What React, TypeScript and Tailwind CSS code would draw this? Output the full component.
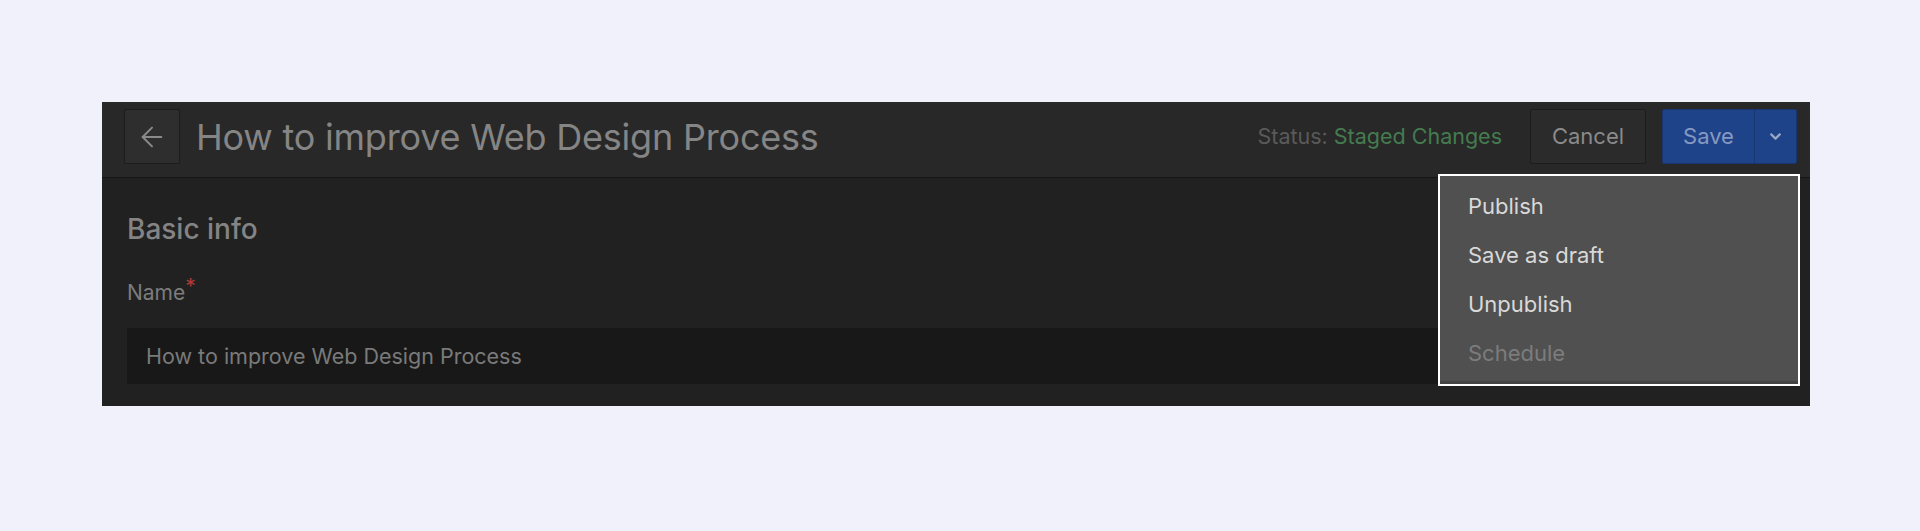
import { ArrowLeft, ChevronDown } from 'lucide-react';

const menuItems = [
  { label: 'Publish', disabled: false },
  { label: 'Save as draft', disabled: false },
  { label: 'Unpublish', disabled: false },
  { label: 'Schedule', disabled: true },
];

export default function App() {
  return (
    <div
      className="h-[531px] w-[1920px] bg-[#f0f1fa] pt-[102px] pl-[102px]"
      style={{ fontFamily: 'Inter, "Noto Sans", sans-serif' }}
    >
      <div className="relative w-[1708px] h-[304px] bg-[#212121]">
        {/* header */}
        <div className="flex items-start h-[76px] bg-[#282828] border-b border-[#151515] pl-[22px] pr-[13px] pt-[7px]">
          <button className="flex items-center justify-center w-[56px] h-[55px] bg-[#2e2e2e] border border-[#1c1c1c] rounded-[2px] text-[#8a8a8a]">
            <ArrowLeft size={32} strokeWidth={1.5} />
          </button>
          <h1 className="ml-[16px] h-[55px] flex items-center text-[36px] leading-none text-[#858585] tracking-[-0.2px]">
            How to improve Web Design Process
          </h1>
          <div className="ml-auto flex items-center h-[55px]">
            <span className="text-[21.5px] text-[#5a5a5a]">
              Status: <span className="text-[#447c50]">Staged Changes</span>
            </span>
            <button className="ml-[28px] w-[116px] h-[55px] bg-[#2b2b2b] border border-[#1c1c1c] rounded-[2px] text-[22px] text-[#8a8a8a]">
              Cancel
            </button>
            <div className="ml-[16px] flex h-[55px] bg-[#1f4388] rounded-[2px] border border-[#1a3470]">
              <button className="w-[91px] text-[22px] text-[#8799c2]">Save</button>
              <button className="w-[42px] flex items-center justify-center border-l border-[#183672] text-[#9aa8c8]">
                <ChevronDown size={17} strokeWidth={3} />
              </button>
            </div>
          </div>
        </div>

        {/* body */}
        <div className="pl-[25px] pr-[24px]">
          <h2 className="pt-[35px] text-[28px] leading-[32px] font-medium text-[#848484]">Basic info</h2>
          <div className="mt-[36px] text-[21px] leading-[24px] text-[#7c7c7c]">
            Name<span className="relative -top-[6px] text-[#b23a3a]">*</span>
          </div>
          <div className="mt-[23px] h-[56px] bg-[#181818] rounded-[2px] flex items-center pl-[19px] text-[21.5px] text-[#7a7a7a]">
            How to improve Web Design Process
          </div>
        </div>

        {/* dropdown menu */}
        <div className="absolute left-[1336px] top-[72px] w-[362px] h-[212px] border-2 border-white bg-[#505050] shadow-[inset_0_-3px_0_#444] pt-[6px] pb-[8px]">
          {menuItems.map((item) => (
            <div
              key={item.label}
              className={`h-[49px] flex items-center pl-[28px] text-[22px] ${
                item.disabled ? 'text-[#7c7c7c]' : 'text-[#d9d9d9]'
              }`}
            >
              {item.label}
            </div>
          ))}
        </div>
      </div>
    </div>
  );
}
